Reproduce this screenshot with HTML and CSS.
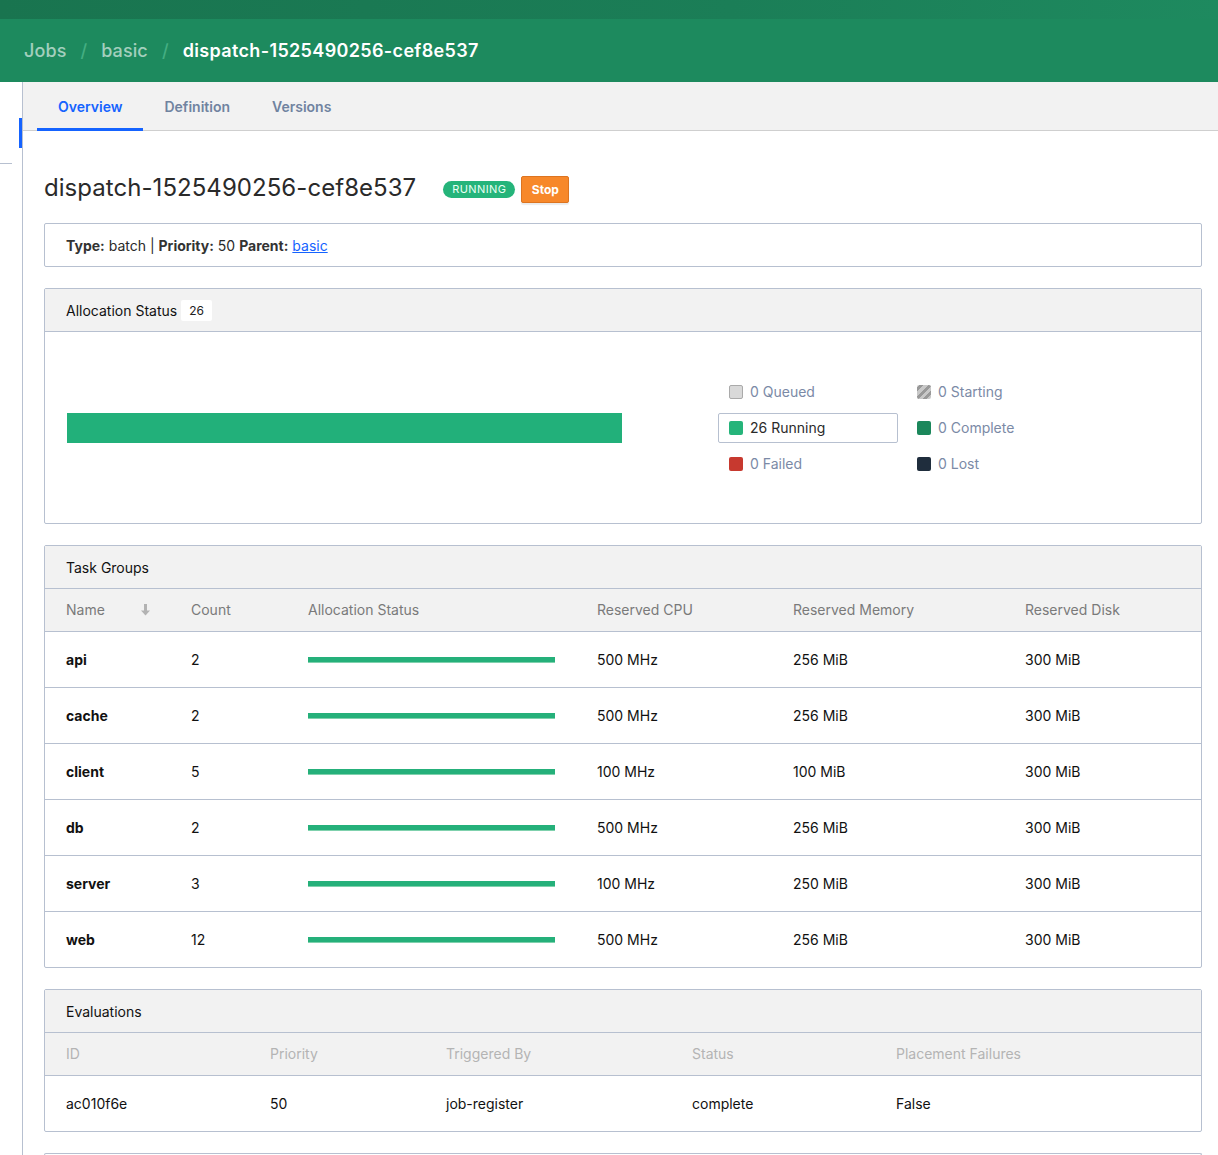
FILE: index.html
```html
<!DOCTYPE html>
<html>
<head>
<meta charset="utf-8">
<link rel="stylesheet" href="styles.css">
</head>
<body>
<div class="topband"></div>
<header class="header">
  <nav class="crumbs">
    <span class="crumb">Jobs</span><span class="sep">/</span><span class="crumb">basic</span><span class="sep">/</span><span class="crumb current">dispatch-1525490256-cef8e537</span>
  </nav>
</header>
<div class="layout">
  <aside class="sidebar">
    <div class="side-active"></div>
    <div class="side-rule"></div>
  </aside>
  <div class="main">
    <div class="tabs">
      <a class="tab active">Overview</a>
      <a class="tab">Definition</a>
      <a class="tab">Versions</a>
    </div>
    <section class="content">
      <div class="title-row">
        <h1 class="title">dispatch-1525490256-cef8e537</h1>
        <span class="status-badge">RUNNING</span>
        <button class="stop-btn">Stop</button>
      </div>

      <div class="box info">
        <span><b>Type:</b> batch | <b>Priority:</b> 50 <b>Parent:</b> <a class="link">basic</a></span>
      </div>

      <div class="box">
        <div class="box-head">Allocation Status <span class="count">26</span></div>
        <div class="alloc-body">
          <div class="alloc-bar-col"><div class="alloc-bar"></div></div>
          <div class="legend">
            <div class="legend-item"><span class="sq queued"></span>0 Queued</div>
            <div class="legend-item"><span class="sq starting"></span>0 Starting</div>
            <div class="legend-item on"><span class="sq running"></span>26 Running</div>
            <div class="legend-item"><span class="sq complete"></span>0 Complete</div>
            <div class="legend-item"><span class="sq failed"></span>0 Failed</div>
            <div class="legend-item"><span class="sq lost"></span>0 Lost</div>
          </div>
        </div>
      </div>

      <div class="box">
        <div class="box-head">Task Groups</div>
        <table class="tbl tg">
          <colgroup>
            <col style="width:125px"><col style="width:117px"><col style="width:289px"><col style="width:196px"><col style="width:232px"><col>
          </colgroup>
          <thead>
            <tr>
              <th><span class="name-th">Name <svg class="sort" width="9" height="12" viewBox="0 0 9 12"><rect x="3" y="0" width="3" height="7" fill="#b3b3b3"/><path d="M0 6.5 H9 L4.5 11.5 Z" fill="#b3b3b3"/></svg></span></th>
              <th>Count</th><th>Allocation Status</th><th>Reserved CPU</th><th>Reserved Memory</th><th>Reserved Disk</th>
            </tr>
          </thead>
          <tbody>
            <tr><td class="b">api</td><td>2</td><td><div class="mini-bar"></div></td><td>500 MHz</td><td>256 MiB</td><td>300 MiB</td></tr>
            <tr><td class="b">cache</td><td>2</td><td><div class="mini-bar"></div></td><td>500 MHz</td><td>256 MiB</td><td>300 MiB</td></tr>
            <tr><td class="b">client</td><td>5</td><td><div class="mini-bar"></div></td><td>100 MHz</td><td>100 MiB</td><td>300 MiB</td></tr>
            <tr><td class="b">db</td><td>2</td><td><div class="mini-bar"></div></td><td>500 MHz</td><td>256 MiB</td><td>300 MiB</td></tr>
            <tr><td class="b">server</td><td>3</td><td><div class="mini-bar"></div></td><td>100 MHz</td><td>250 MiB</td><td>300 MiB</td></tr>
            <tr><td class="b">web</td><td>12</td><td><div class="mini-bar"></div></td><td>500 MHz</td><td>256 MiB</td><td>300 MiB</td></tr>
          </tbody>
        </table>
      </div>

      <div class="box">
        <div class="box-head">Evaluations</div>
        <table class="tbl ev">
          <colgroup>
            <col style="width:204px"><col style="width:176px"><col style="width:246px"><col style="width:204px"><col>
          </colgroup>
          <thead>
            <tr><th>ID</th><th>Priority</th><th>Triggered By</th><th>Status</th><th>Placement Failures</th></tr>
          </thead>
          <tbody>
            <tr><td>ac010f6e</td><td>50</td><td>job-register</td><td>complete</td><td>False</td></tr>
          </tbody>
        </table>
      </div>

      <div class="box stub"></div>
    </section>
  </div>
</div>
</body>
</html>
```

FILE: styles.css
```css
* { box-sizing: border-box; }
html, body { margin: 0; padding: 0; background: #fff; }
body {
  font-family: "Inter", "Noto Sans", sans-serif;
  font-size: 14px;
  color: #0a0a0a;
  width: 1218px;
  height: 1155px;
  overflow: hidden;
}
.topband {
  height: 19px;
  background: linear-gradient(90deg, #19744f 0%, #1b7e57 60%, #1e8a5f 100%);
}
.header {
  height: 63px;
  background: #1d8a5e;
  display: flex;
  align-items: center;
  padding-left: 24px;
}
.crumbs { display: flex; align-items: center; font-size: 18px; font-weight: 500; letter-spacing: 0.1px; }
.crumb { color: rgba(255,255,255,0.6); }
.crumb.current { color: #fff; font-weight: 600; letter-spacing: 0.35px; }
.sep { color: #44ae82; margin: 0 14px 0 14px; }

.layout { display: flex; }
.sidebar {
  width: 23px;
  flex: none;
  border-right: 1px solid #b7c0d0;
  height: 1073px;
  padding-top: 36px;
}
.side-active { width: 3px; height: 30px; margin-left: 19px; background: #1563ff; }
.side-rule { width: 12px; height: 1px; background: #b7c0d0; margin-top: 15px; }

.main { flex: 1; min-width: 0; }
.tabs {
  height: 49px;
  background: #f2f2f2;
  border-bottom: 1px solid #cfcfcf;
  display: flex;
  padding-left: 14px;
}
.tab {
  display: flex;
  align-items: center;
  padding: 0 21px;
  height: 49px;
  color: #7083a0;
  font-weight: 600;
  font-size: 14px;
  border-bottom: 3px solid transparent;
  padding-top: 3px;
}
.tab.active { color: #1563ff; border-bottom-color: #1563ff; }

.content { padding: 0 16px 0 21px; }
.title-row { display: flex; align-items: center; height: 30px; margin: 41px 0 21px; }
.title { margin: 0; font-size: 24px; font-weight: 400; color: #2a2a2a; letter-spacing: 0.05px; }
.status-badge {
  margin-left: 27px;
  margin-top: 5px;
  height: 17px;
  padding: 0 9px;
  border-radius: 9px;
  background: #25b47a;
  color: #eafff4;
  font-size: 11px;
  line-height: 17px;
  letter-spacing: 0.4px;
}
.stop-btn {
  margin-left: 6px;
  margin-top: 5px;
  height: 27px;
  width: 48px;
  background: #f7882a;
  border: 1px solid #dd7420;
  border-radius: 2px;
  color: #fff;
  font-family: inherit;
  font-weight: 700;
  font-size: 12px;
  box-shadow: 0 2px 1px rgba(0,0,0,0.08);
  padding: 0;
}

.box {
  border: 1px solid #b7c0d0;
  border-radius: 2px;
  margin-bottom: 21px;
  background: #fff;
}
.info { height: 44px; display: flex; align-items: center; padding-left: 21px; color: #2a2a2a; }
.info b { font-weight: 700; color: #333; }
.link { color: #1563ff; text-decoration: underline; }

.box-head {
  height: 43px;
  background: #f2f2f2;
  border-bottom: 1px solid #b7c0d0;
  display: flex;
  align-items: center;
  padding-left: 21px;
  color: #111;
}
.count {
  margin-left: 4px;
  background: #fff;
  height: 21px;
  width: 31px;
  display: inline-flex;
  align-items: center;
  justify-content: center;
  font-size: 12px;
  border-radius: 2px;
  color: #222;
}
.alloc-body {
  height: 191px;
  display: flex;
  align-items: center;
  padding: 0 22px;
}
.alloc-bar-col { width: 50%; }
.alloc-bar { height: 30px; background: #22b07a; width: 555px; }
.legend {
  display: grid;
  grid-template-columns: 180px 180px;
  column-gap: 8px;
  row-gap: 6px;
  margin-left: 95px;
}
.legend-item {
  height: 30px;
  display: flex;
  align-items: center;
  padding-left: 10px;
  border: 1px solid transparent;
  border-radius: 2px;
  color: #7b8aa6;
  font-size: 14px;
}
.legend-item.on { border-color: #b7c0d0; color: #2a2a2a; }
.sq { width: 14px; height: 14px; border-radius: 2px; margin-right: 7px; flex: none; }
.sq.queued { background: #d9d9d9; border: 1px solid #aaa; }
.sq.starting { background: repeating-linear-gradient(-45deg, #c8c8c8 0 3px, #999 3px 6px); }
.sq.running { background: #25b47a; }
.sq.complete { background: #1b875b; }
.sq.failed { background: #c7392f; }
.sq.lost { background: #1f2d3d; }

.tbl { width: 100%; border-collapse: collapse; table-layout: fixed; }
.tbl th {
  height: 42px;
  background: #f2f2f2;
  border-bottom: 1px solid #b7c0d0;
  text-align: left;
  font-weight: 400;
  padding: 0 0 0 21px;
  color: #7a7a7a;
}
.tbl td { height: 56px; padding: 0 21px 0 21px; border-bottom: 1px solid #b7c0d0; color: #111; }
.tbl tbody tr:last-child td { border-bottom: none; }
.tbl td.b { font-weight: 700; }
.ev th { color: #b4b4b4; }
.name-th { display: inline-flex; align-items: center; }
.sort { margin-left: 36px; }
.mini-bar { height: 6px; background: #25b07a; margin-top: 2px; border-bottom: 1px solid #7fd1ad; }
.stub { height: 40px; border-bottom: none; margin-bottom: 0; }
```
